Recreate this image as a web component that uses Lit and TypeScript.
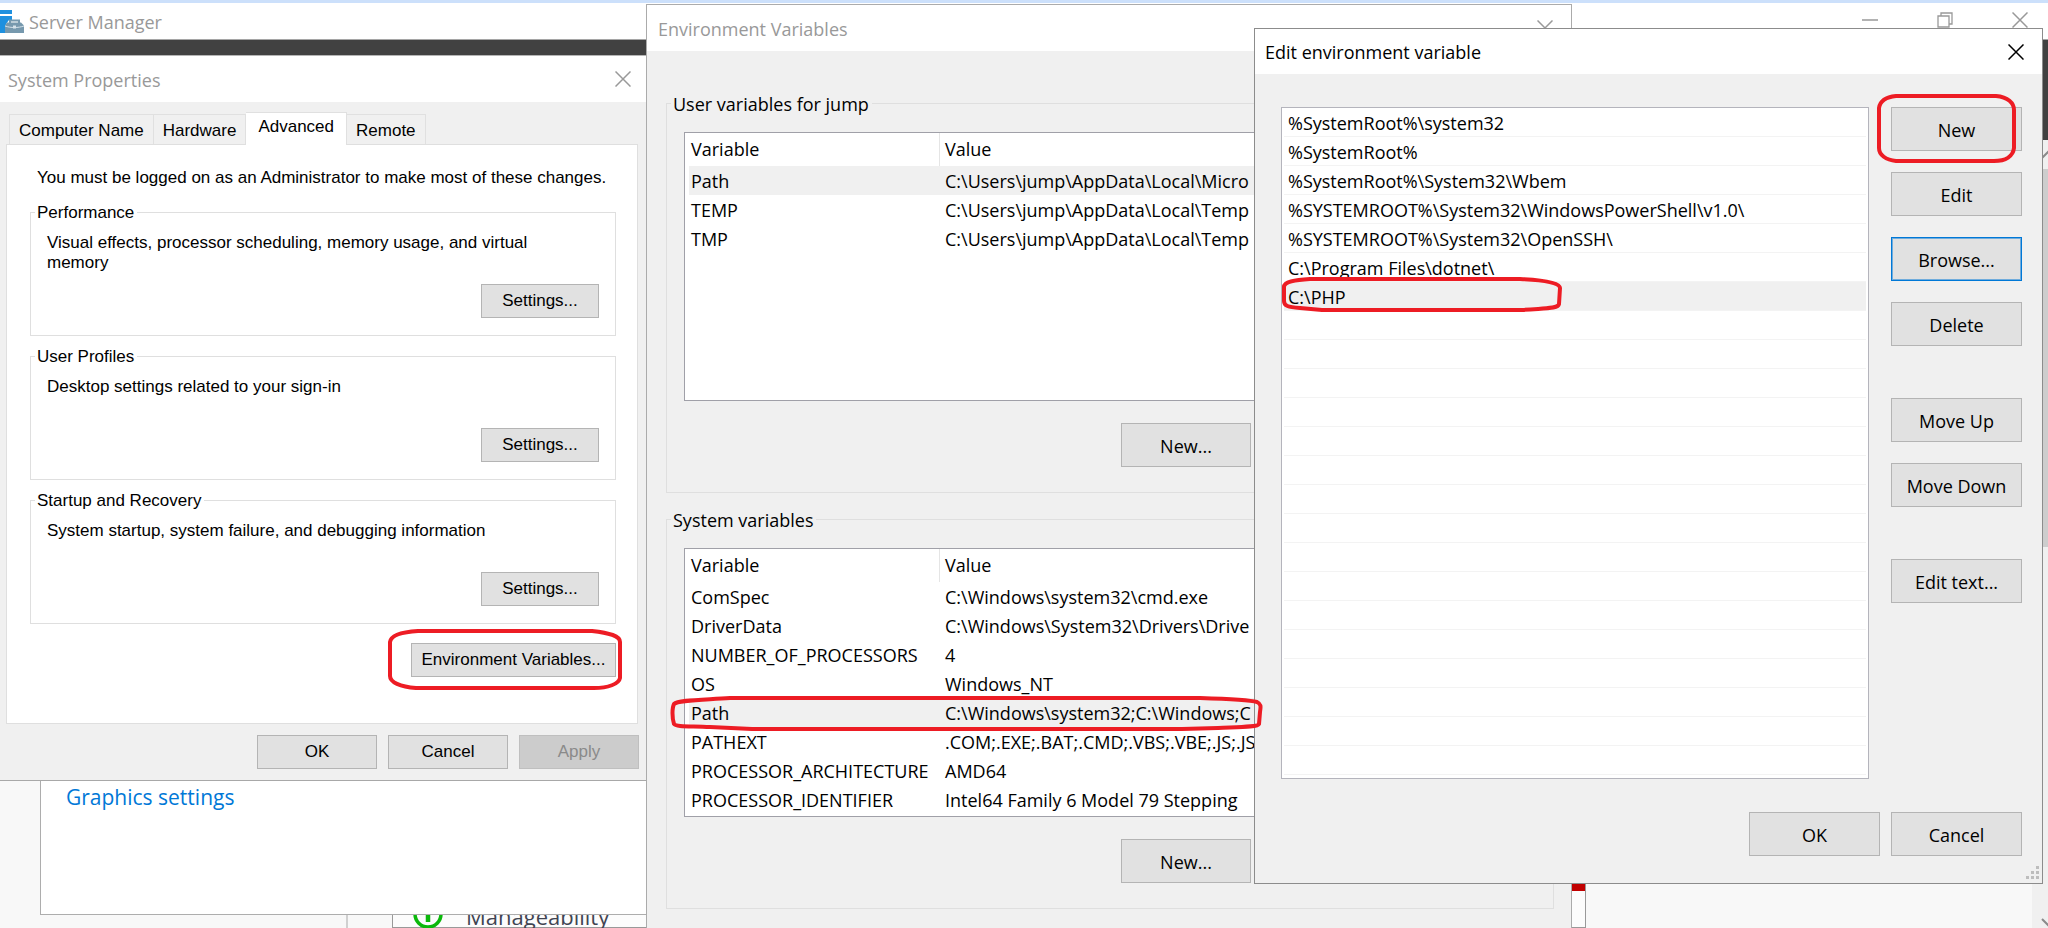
import { LitElement, html, css, svg } from "lit";
import { customElement } from "lit/decorators.js";
import { classMap } from "lit/directives/class-map.js";

const USER_VARIABLES = [
  { name: "Path", value: "C:\\Users\\jump\\AppData\\Local\\Micro", selected: true },
  { name: "TEMP", value: "C:\\Users\\jump\\AppData\\Local\\Temp" },
  { name: "TMP", value: "C:\\Users\\jump\\AppData\\Local\\Temp" },
];

const SYSTEM_VARIABLES = [
  { name: "ComSpec", value: "C:\\Windows\\system32\\cmd.exe" },
  { name: "DriverData", value: "C:\\Windows\\System32\\Drivers\\Drive" },
  { name: "NUMBER_OF_PROCESSORS", value: "4" },
  { name: "OS", value: "Windows_NT" },
  { name: "Path", value: "C:\\Windows\\system32;C:\\Windows;C", selected: true },
  { name: "PATHEXT", value: ".COM;.EXE;.BAT;.CMD;.VBS;.VBE;.JS;.JS" },
  { name: "PROCESSOR_ARCHITECTURE", value: "AMD64" },
  { name: "PROCESSOR_IDENTIFIER", value: "Intel64 Family 6 Model 79 Stepping" },
];

const PATH_ENTRIES = [
  "%SystemRoot%\\system32",
  "%SystemRoot%",
  "%SystemRoot%\\System32\\Wbem",
  "%SYSTEMROOT%\\System32\\WindowsPowerShell\\v1.0\\",
  "%SYSTEMROOT%\\System32\\OpenSSH\\",
  "C:\\Program Files\\dotnet\\",
  "C:\\PHP",
];
const VISIBLE_ROWS = 23;

const closeGlyph = html`<svg width="16" height="16" viewBox="0 0 16 16" aria-hidden="true">
  <path d="M0.5 0.5L15.5 15.5M15.5 0.5L0.5 15.5" fill="none" stroke="currentColor" stroke-width="1.5" />
</svg>`;

const base = css`
  * {
    box-sizing: border-box;
  }
  button {
    font: inherit;
    color: #000;
    margin: 0;
    padding: 0;
    background: #e1e1e1;
    border: 1px solid #b4b4b4;
    white-space: nowrap;
  }
  .titlebar {
    display: flex;
    align-items: center;
    justify-content: space-between;
    background: #fff;
    color: #999;
    font: 18px/24px "Open Sans", "Noto Sans", sans-serif;
  }
  .titlebar h2 {
    margin: 0;
    padding-top: 1px;
    font: inherit;
  }
  .titlebar .glyph {
    display: flex;
    padding: 0;
    border: 0;
    background: none;
    color: inherit;
  }
  fieldset {
    min-width: 0;
    margin: 0;
    border: 1px solid #dfdfdf;
  }
  legend {
    padding: 2px 3px 0 2px;
  }
`;

@customElement("system-properties")
class SystemProperties extends LitElement {
  static styles = [
    base,
    css`
      :host {
        display: flex;
        flex-direction: column;
        background: #f0f0f0;
        border-top: 1px solid #b5b5b5;
        border-bottom: 1px solid #a8a8a8;
        font: 17px/20px "Liberation Sans", Arial, sans-serif;
        color: #000;
      }
      .titlebar {
        height: 46px;
        padding: 0 15px 0 8px;
      }
      .tabs {
        display: flex;
        align-items: flex-end;
        padding: 10px 9px 0;
      }
      .tab {
        height: 30px;
        padding: 2px 9px 0;
        background: #f0f0f0;
        border: 1px solid #e0e0e0;
        border-bottom: 0;
      }
      .tab + .tab {
        border-left: 0;
      }
      .tab.active {
        height: 33px;
        padding: 0 12px 4px;
        margin-bottom: -1px;
        background: #fff;
        z-index: 1;
      }
      .panel {
        display: flex;
        flex-direction: column;
        flex: 1;
        margin: 0 8px 0 6px;
        padding: 23px 21px 0 23px;
        background: #fff;
        border: 1px solid #dfdfdf;
      }
      .note {
        margin: 0 0 13px;
        padding-left: 7px;
        white-space: nowrap;
      }
      fieldset {
        padding: 10px 16px 17px 4px;
      }
      fieldset + fieldset {
        margin-top: 9px;
      }
      .desc {
        min-height: 40px;
        margin: 0 0 11px;
        padding: 0 32px 0 12px;
      }
      .action {
        display: flex;
        justify-content: flex-end;
      }
      .small {
        width: 118px;
        height: 34px;
      }
      .wide {
        align-self: flex-end;
        width: 205px;
        height: 34px;
        margin-top: 19px;
      }
      .footer {
        display: flex;
        justify-content: flex-end;
        gap: 11px;
        padding: 11px 7px 11px;
      }
      .footer button {
        width: 120px;
        height: 34px;
      }
      .footer button:disabled {
        background: #ccc;
        border-color: #bfbfbf;
        color: #8a8a8a;
      }
    `,
  ];

  private group(title: string, text: string) {
    return html`<fieldset>
      <legend>${title}</legend>
      <p class="desc">${text}</p>
      <div class="action"><button class="small">Settings...</button></div>
    </fieldset>`;
  }

  render() {
    return html`
      <header class="titlebar">
        <h2>System Properties</h2>
        <button class="glyph" aria-label="Close">${closeGlyph}</button>
      </header>
      <div class="tabs" role="tablist">
        ${["Computer Name", "Hardware", "Advanced", "Remote"].map(
          (t) => html`<button
            role="tab"
            aria-selected=${t === "Advanced"}
            class=${classMap({ tab: true, active: t === "Advanced" })}
          >
            ${t}
          </button>`
        )}
      </div>
      <section class="panel" role="tabpanel">
        <p class="note">You must be logged on as an Administrator to make most of these changes.</p>
        ${this.group("Performance", "Visual effects, processor scheduling, memory usage, and virtual memory")}
        ${this.group("User Profiles", "Desktop settings related to your sign-in")}
        ${this.group("Startup and Recovery", "System startup, system failure, and debugging information")}
        <button class="wide">Environment Variables...</button>
      </section>
      <footer class="footer">
        <button>OK</button>
        <button>Cancel</button>
        <button disabled>Apply</button>
      </footer>
    `;
  }
}

@customElement("environment-variables")
class EnvironmentVariables extends LitElement {
  static styles = [
    base,
    css`
      :host {
        display: flex;
        flex-direction: column;
        background: #f0f0f0;
        border: 1px solid #ababab;
        border-bottom: 0;
        font: 18px/24px "Open Sans", "Noto Sans", sans-serif;
        color: #000;
      }
      .titlebar {
        height: 46px;
        padding: 0 18px 0 11px;
      }
      .body {
        display: flex;
        flex-direction: column;
        gap: 13px;
        padding: 39px 17px 0 19px;
      }
      fieldset {
        padding: 16px 18px 25px 4px;
      }
      .list {
        height: 269px;
        margin-left: 13px;
        padding-left: 4px;
        background: #fff;
        border: 1px solid #a0a0a8;
        overflow: hidden;
      }
      table {
        width: 100%;
        table-layout: fixed;
        border-collapse: separate;
        border-spacing: 0;
        text-align: left;
      }
      th {
        height: 33px;
        padding: 0 0 0 2px;
        font-weight: normal;
        line-height: 33px;
      }
      th:first-child {
        width: 251px;
        border-right: 1px solid #e5e5e5;
      }
      td {
        height: 29px;
        padding: 2px 0 0 2px;
        line-height: 27px;
        white-space: nowrap;
      }
      th + th,
      td + td {
        padding-left: 5px;
      }
      .selected td {
        background: #f0f0f0;
      }
      .actions {
        display: flex;
        justify-content: flex-end;
        gap: 12px;
        margin-top: 22px;
      }
      .actions button {
        width: 130px;
        height: 44px;
        padding-top: 2px;
      }
    `,
  ];

  private group(title: string, rows: { name: string; value: string; selected?: boolean }[]) {
    return html`<fieldset>
      <legend>${title}</legend>
      <div class="list">
        <table aria-label=${title}>
          <thead>
            <tr>
              <th>Variable</th>
              <th>Value</th>
            </tr>
          </thead>
          <tbody>
            ${rows.map(
              (r) => html`<tr class=${classMap({ selected: !!r.selected })}>
                <td>${r.name}</td>
                <td>${r.value}</td>
              </tr>`
            )}
          </tbody>
        </table>
      </div>
      <div class="actions">
        <button>New...</button>
        <button aria-label="Edit"></button>
        <button aria-label="Delete"></button>
      </div>
    </fieldset>`;
  }

  render() {
    return html`
      <header class="titlebar">
        <h2>Environment Variables</h2>
        <button class="glyph" aria-label="Close">${closeGlyph}</button>
      </header>
      <div class="body">
        ${this.group("User variables for jump", USER_VARIABLES)}
        ${this.group("System variables", SYSTEM_VARIABLES)}
      </div>
    `;
  }
}

@customElement("edit-variable")
class EditVariable extends LitElement {
  static styles = [
    base,
    css`
      :host {
        display: flex;
        flex-direction: column;
        background: #f0f0f0;
        border: 1px solid #8c8c8c;
        font: 18px/24px "Open Sans", "Noto Sans", sans-serif;
        color: #000;
      }
      .titlebar {
        height: 45px;
        padding: 0 18px 0 10px;
        color: #000;
      }
      .content {
        display: flex;
        gap: 22px;
        padding: 33px 20px 33px 26px;
      }
      ul {
        flex: 1;
        min-height: 672px;
        margin: 0;
        padding: 0 2px;
        list-style: none;
        background: #fff;
        border: 1px solid #b4b4bc;
      }
      li {
        height: 29px;
        padding-left: 4px;
        border-bottom: 1px solid #f3f3f3;
        line-height: 31px;
        white-space: nowrap;
      }
      .selected {
        background: #f0f0f0;
      }
      .side {
        display: flex;
        flex-direction: column;
        gap: 21px;
      }
      .side button,
      .footer button {
        width: 131px;
        height: 44px;
        padding-top: 2px;
      }
      .side .section {
        margin-top: 31px;
      }
      .side .focused {
        border-color: #0078d7;
        outline: 1px solid #0078d780;
        outline-offset: -2px;
      }
      .footer {
        display: flex;
        justify-content: flex-end;
        gap: 11px;
        padding: 0 20px 10px;
      }
      .grip {
        align-self: flex-end;
        margin: 0 3px 4px;
      }
    `,
  ];

  render() {
    const rows = Array.from({ length: VISIBLE_ROWS }, (_, i) => PATH_ENTRIES[i] ?? "");
    return html`
      <header class="titlebar">
        <h2>Edit environment variable</h2>
        <button class="glyph" aria-label="Close">${closeGlyph}</button>
      </header>
      <div class="content">
        <ul aria-label="Path entries">
          ${rows.map((r) => html`<li class=${classMap({ selected: r === "C:\\PHP" })}>${r}</li>`)}
        </ul>
        <div class="side">
          <button>New</button>
          <button>Edit</button>
          <button class="focused">Browse...</button>
          <button>Delete</button>
          <button class="section">Move Up</button>
          <button>Move Down</button>
          <button class="section">Edit text...</button>
        </div>
      </div>
      <footer class="footer">
        <button>OK</button>
        <button>Cancel</button>
      </footer>
      <svg class="grip" width="13" height="13" viewBox="0 0 13 13" fill="#bdbdbd" aria-hidden="true">
        <path d="M10 0h3v3h-3zM5 5h3v3h-3zM10 5h3v3h-3zM0 10h3v3h-3zM5 10h3v3h-3zM10 10h3v3h-3z" />
      </svg>
    `;
  }
}

@customElement("server-manager")
class ServerManager extends LitElement {
  static styles = [
    base,
    css`
      :host {
        display: flex;
        flex-direction: column;
        background: #f8f8f8;
        border-top: 3px solid #cce0fb;
      }
      .titlebar {
        flex: none;
        height: 37px;
        padding-right: 20px;
        border-bottom: 1px solid #a5a5a5;
      }
      .brand {
        display: flex;
        align-items: center;
        gap: 5px;
      }
      .controls {
        display: flex;
        gap: 59px;
        padding-bottom: 2px;
      }
      .ribbon {
        flex: none;
        height: 100px;
        background: #414141;
      }
      .main {
        display: flex;
        flex: 1;
        min-height: 0;
      }
      .nav {
        width: 348px;
        border-right: 2px solid #d0d0d0;
      }
      .tile {
        width: 1194px;
        margin-left: 44px;
        padding-top: 700px;
        background: #fcfcfc;
        border: 1px solid #999;
      }
      .strip {
        height: 50px;
        background: #c00000;
      }
      .row {
        display: flex;
        align-items: center;
        gap: 23px;
        height: 32px;
        margin-top: 7px;
        padding-left: 20px;
        color: #3f4452;
        font: 22px/28px "Open Sans", "Noto Sans", sans-serif;
      }
      .row span {
        padding-top: 3px;
      }
      .scroll {
        display: flex;
        flex-direction: column;
        width: 16px;
        margin-left: auto;
        background: #f0f0f0;
      }
      .arrow {
        display: flex;
        align-items: center;
        height: 29px;
        padding-left: 9px;
      }
      .arrow svg {
        flex: none;
        fill: none;
        stroke: #8a8a8a;
        stroke-width: 2;
      }
      .arrow.down {
        height: 12px;
      }
      .thumb {
        height: 378px;
        margin-bottom: auto;
        background: #cdcdcd;
      }
    `,
  ];

  render() {
    return html`
      <header class="titlebar">
        <div class="brand">
          <svg width="24" height="24" viewBox="0 0 24 24" aria-hidden="true">
            <path d="M0 1h12v4H0zM0 7h12v4H9l-3 4-1 9H0z" fill="#1e90df" />
            <path d="M10 14v-2.500h9v2.500" fill="none" stroke="#7799ae" stroke-width="2" />
            <path d="M7 13.500h14l3 3v7.500H5v-7.500z" fill="#7799ae" />
            <path d="M5 17c6 2 13 2 19 0" fill="none" stroke="#d5e2ea" />
            <path d="M13 16.500h3v3h-3z" fill="#d5e2ea" />
          </svg>
          <h2>Server Manager</h2>
        </div>
        <div class="controls">
          <button class="glyph" aria-label="Minimize">
            <svg width="16" height="16" viewBox="0 0 16 16"><path d="M0 8h16" stroke="currentColor" stroke-width="1.5" /></svg>
          </button>
          <button class="glyph" aria-label="Restore">
            <svg width="16" height="16" viewBox="0 0 16 16">
              <path d="M1 4h11v11H1zM4 4V1h11v11h-3" fill="none" stroke="currentColor" stroke-width="1.3" />
            </svg>
          </button>
          <button class="glyph" aria-label="Close">${closeGlyph}</button>
        </div>
      </header>
      <div class="ribbon"></div>
      <div class="main">
        <div class="nav"></div>
        <div class="tile">
          <div class="strip"></div>
          <div class="row">
            <svg width="30" height="30" viewBox="0 0 30 30" aria-hidden="true">
              <circle cx="15" cy="15" r="13" fill="none" stroke="#0bb80b" stroke-width="3.5" />
              <path d="M15 7v16" stroke="#0bb80b" stroke-width="4.5" />
            </svg>
            <span>Manageability</span>
          </div>
        </div>
        <div class="scroll">
          <div class="arrow"><svg width="16" height="9" viewBox="0 0 16 9"><path d="M1 8l7-7 7 7" /></svg></div>
          <div class="thumb"></div>
          <div class="arrow down"><svg width="16" height="9" viewBox="0 0 16 9"><path d="M1 1l7 7 7-7" /></svg></div>
        </div>
      </div>
    `;
  }
}

@customElement("app-root")
class AppRoot extends LitElement {
  static styles = css`
    :host {
      display: block;
      position: relative;
      height: 100vh;
      overflow: hidden;
    }
    * {
      box-sizing: border-box;
    }
    server-manager {
      height: 100%;
    }
    .settings,
    system-properties,
    environment-variables,
    edit-variable,
    .marks {
      position: absolute;
    }
    .settings {
      display: flex;
      align-items: flex-end;
      left: 40px;
      top: 55px;
      width: 640px;
      height: 860px;
      padding: 0 25px 103px;
      background: #fff;
      border: 1px solid #adadad;
    }
    .settings a {
      color: #0078d7;
      font: 21px/28px "Open Sans", "Noto Sans", sans-serif;
      text-decoration: none;
    }
    system-properties {
      left: 0;
      top: 55px;
      width: 646px;
      height: 726px;
    }
    environment-variables {
      left: 646px;
      top: 4px;
      bottom: 0;
      width: 926px;
    }
    edit-variable {
      left: 1254px;
      top: 28px;
      width: 789px;
    }
    .marks {
      left: 0;
      top: 0;
      overflow: visible;
      pointer-events: none;
    }
  `;

  private mark(d: string) {
    return svg`<path d=${d} fill="none" stroke="#ed1c24" stroke-width="4" stroke-linejoin="round" />`;
  }

  render() {
    return html`
      <server-manager></server-manager>
      <section class="settings"><a href="#graphics">Graphics settings</a></section>
      <system-properties></system-properties>
      <environment-variables></environment-variables>
      <edit-variable></edit-variable>
      <svg class="marks" width="2048" height="928" viewBox="0 0 2048 928" aria-hidden="true">
        ${this.mark("M418 631H592C610 633 620 636 620 642V678C619 684 608 688 594 688H416C400 687 390 682 390 676V642C391 635 402 632 418 631Z")}
        ${this.mark("M730 698H1200C1230 699 1250 700 1257 702C1261 704 1261 706 1260 712L1259 724C1258 727 1240 727 1218 728L1182 729H752L710 727C690 726 676 727 674 724C672 718 672 708 674 704C678 700 700 700 730 698Z")}
        ${this.mark("M1310 279H1520C1546 280 1560 283 1560 288L1559 304C1558 309 1546 308 1522 310H1322L1300 308C1288 307 1284 306 1284 301V287C1284 282 1294 280 1310 279Z")}
        ${this.mark("M1896 96H1996C2008 97 2014 103 2014 110V148C2013 156 2006 161 1994 161H1896C1886 160 1879 155 1879 148V108C1880 101 1886 97 1896 96Z")}
      </svg>
    `;
  }
}
